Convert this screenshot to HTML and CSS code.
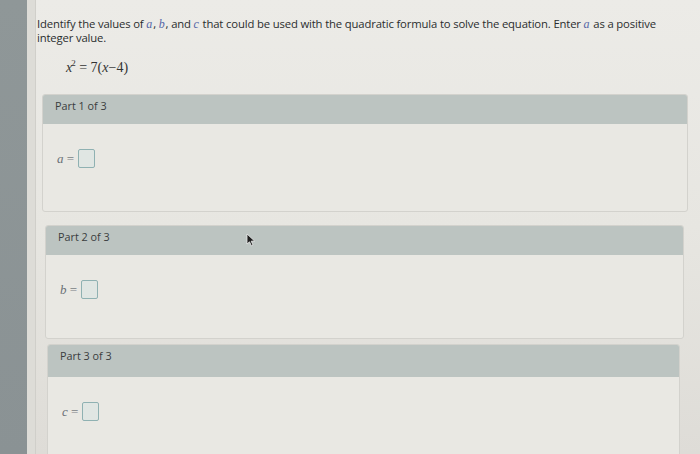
FILE: index.html
```html
<!DOCTYPE html>
<html>
<head>
<meta charset="utf-8">
<link rel="stylesheet" href="styles.css">
</head>
<body>
<div class="page">
  <div class="strip"></div>
  <div class="rail"></div>
  <div class="main">
    <p class="question">Identify the values of <span class="v">a</span>, <span class="v">b</span>, and <span class="v">c</span> that could be used with the quadratic formula to solve the equation. Enter <span class="v">a</span> as a positive<br><span>integer value.</span></p>
    <div class="equation"><span class="mv">x</span><sup>2</sup> = 7(<span class="mv">x</span>−4)</div>

    <div class="card c1">
      <div class="card-head">Part 1 of 3</div>
      <div class="card-body"><span class="lbl"><span class="mv">a</span> =</span><span class="box"></span></div>
    </div>
    <div class="card c2">
      <div class="card-head">Part 2 of 3</div>
      <div class="card-body"><span class="lbl"><span class="mv">b</span> =</span><span class="box"></span></div>
    </div>
    <div class="card c3">
      <div class="card-head">Part 3 of 3</div>
      <div class="card-body"><span class="lbl"><span class="mv">c</span> =</span><span class="box"></span></div>
    </div>
  </div>
  <svg class="cursor" width="10" height="14" viewBox="0 0 10 14"><path d="M1 1 L1 11 L3.5 8.8 L5.4 12.8 L7 12 L5.2 8.2 L8.6 8 Z" fill="#1e1e1e" stroke="#eee" stroke-width="0.8"/></svg>
</div>
</body>
</html>
```
FILE: styles.css
```css
html, body { margin: 0; padding: 0; }
body {
  width: 700px; height: 454px; overflow: hidden;
  font-family: "Open Sans", "Liberation Sans", sans-serif;
  color: #2a2d2e;
}
.page {
  position: relative;
  display: flex;
  width: 700px; height: 454px;
  overflow: hidden;
  background: linear-gradient(180deg, #ecebe7 0%, #e7e6e1 50%, #dedcd7 100%);
}
.strip { width: 27px; flex: none; background: linear-gradient(180deg, #8f9798, #8a9294); }
.rail { width: 8px; flex: none; background: #dddcd7; border-right: 1px solid #d0cfca; }
.main { flex: 1; padding: 17px 12px 0 1px; min-width: 0; overflow: hidden; }
.question { margin: 0; font-size: 11.3px; line-height: 14px; letter-spacing: -0.15px; white-space: nowrap; }
.v { display: inline-block; font-family: "Liberation Serif", serif; font-style: italic; font-size: 12px; line-height: 14px; color: #5567a6; margin: 0 1px 0 0; }
.equation { margin: 13px 0 0 29px; font-family: "Liberation Serif", serif; font-size: 14px; height: 20px; line-height: 20px; color: #333; }
.equation sup { font-size: 9px; margin-left: -1px; line-height: 0; vertical-align: 6px; }
.mv { font-style: italic; font-family: "Liberation Serif", serif; }
.card { margin-left: 5px; border: 1px solid #d3d2cd; border-radius: 3px; background: #e9e8e3; overflow: hidden; }
.c1 { margin-top: 16px; height: 116px; }
.c2 { margin-top: 13px; height: 112px; margin-left: 8px; margin-right: 4px; }
.c3 { margin-top: 5px; height: 140px; margin-left: 10px; margin-right: 8px; }
.card-head { height: 29px; background: #bcc4c1; font-size: 10.8px; line-height: 21px; padding-left: 12px; color: #3a3d3e; }
.c3 .card-head { height: 32px; line-height: 22px; }
.card-body { display: flex; align-items: center; padding: 25px 0 0 14px; }
.lbl { font-family: "Liberation Serif", serif; font-size: 13px; color: #7a7f85; padding-right: 4px; }
.lbl .mv { color: #6a7076; }
.box { width: 15px; height: 17px; border: 1px solid #8fb1b2; border-radius: 2px; background: #e0e6e3; }
.cursor { position: absolute; left: 246px; top: 233px; }
```
